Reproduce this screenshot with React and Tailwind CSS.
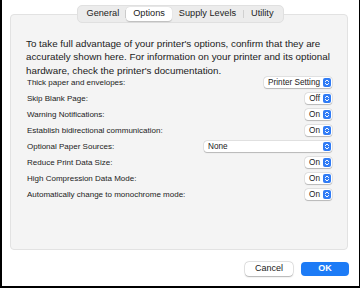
import React from "react";

function Arrows() {
  return (
    <span className="flex h-[9px] w-[8px] items-center justify-center rounded-[2px] bg-[#2f7bf5]">
      <svg width="6" height="7" viewBox="0 0 6 7" fill="none" stroke="white" strokeWidth="1" strokeLinecap="round" strokeLinejoin="round">
        <path d="M1.3 2.6 L3 1 L4.7 2.6" />
        <path d="M1.3 4.4 L3 6 L4.7 4.4" />
      </svg>
    </span>
  );
}

function Popup({ value, wide }) {
  return (
    <div
      className={
        "flex h-[11px] items-center justify-between rounded-[3px] bg-white pl-[4px] pr-[1px] shadow-[0_0_0_0.5px_rgba(0,0,0,0.12),0_0.5px_1px_rgba(0,0,0,0.2)] " +
        (wide ? "w-[128px]" : "")
      }
    >
      <span className="pr-[3px] text-[8.2px] leading-none text-[#222]">{value}</span>
      <Arrows />
    </div>
  );
}

const rows = [
  ["Thick paper and envelopes:", "Printer Setting"],
  ["Skip Blank Page:", "Off"],
  ["Warning Notifications:", "On"],
  ["Establish bidirectional communication:", "On"],
  ["Optional Paper Sources:", "None", true],
  ["Reduce Print Data Size:", "On"],
  ["High Compression Data Mode:", "On"],
  ["Automatically change to monochrome mode:", "On"],
];

export default function App() {
  return (
    <div
      className="relative h-[288px] w-[360px] overflow-hidden border-b-2 border-l-2 border-r border-black bg-white"
      style={{ fontFamily: '"Liberation Sans", Arial, sans-serif' }}
    >
      <div className="absolute left-[8px] top-[14px] h-[236px] w-[338px] rounded-[4px] border border-[#e2e2e2] bg-[#f4f4f4]" />
      <div className="relative flex flex-col">
        <div className="flex justify-center pt-[5px]">
          <div className="flex h-[18px] items-center rounded-[5px] border border-[#e0e0e0] bg-[#ececec] px-[2px] text-[9.2px] text-[#222]">
            <span className="px-[6px]">General</span>
            <span className="h-[8px] w-px bg-[#d0d0d0]" />
            <span className="flex h-[14px] items-center rounded-[4px] bg-white px-[7px] shadow-[0_0.5px_1px_rgba(0,0,0,0.2)]">Options</span>
            <span className="px-[7px]">Supply Levels</span>
            <span className="h-[8px] w-px bg-[#d0d0d0]" />
            <span className="px-[7px]">Utility</span>
          </div>
        </div>
        <p className="ml-[24px] mt-[14px] w-[310px] text-[9.8px] leading-[13.3px] text-[#1b1b1b]">
          To take full advantage of your printer's options, confirm that they are accurately shown here. For information on your printer and its optional hardware, check the printer's documentation.
        </p>
        <div className="ml-[25px] mr-[27px] mt-[-2px] flex flex-col">
          {rows.map(([label, value, wide]) => (
            <div key={label} className="flex h-[16px] items-center justify-between">
              <span className="text-[8px] text-[#222]">{label}</span>
              <Popup value={value} wide={wide} />
            </div>
          ))}
        </div>
      </div>
      <div className="absolute bottom-[10px] right-[10px] flex gap-[8px]">
        <button className="flex h-[14px] w-[48px] items-center justify-center rounded-[4px] bg-white text-[9px] text-[#222] shadow-[0_0_0_0.5px_rgba(0,0,0,0.15),0_0.5px_1.5px_rgba(0,0,0,0.25)]">
          Cancel
        </button>
        <button className="flex h-[14px] w-[48px] items-center justify-center rounded-[4px] bg-[#1c7bf6] text-[9px] font-bold text-white">
          OK
        </button>
      </div>
    </div>
  );
}
